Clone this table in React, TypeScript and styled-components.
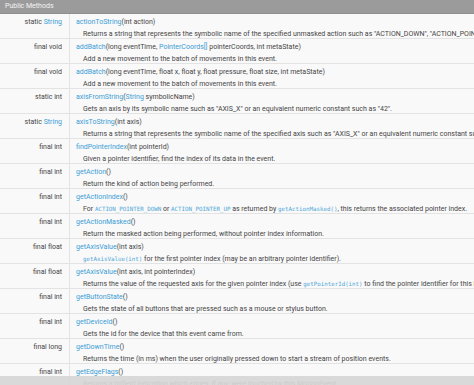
import styled, { createGlobalStyle } from "styled-components";
import React from "react";

const GlobalStyle = createGlobalStyle`
  html, body {
    margin: 0;
    padding: 0;
    background: #f9f9f9;
    overflow: hidden;
  }
  body {
    font-family: Roboto, "Liberation Sans", sans-serif;
    color: #454545;
  }
`;

const Page = styled.div`
  position: relative;
  width: 474px;
  height: 385px;
  overflow: hidden;
`;

const Header = styled.div`
  height: 13px;
  background: #9b9b9b;
  border-bottom: 1px solid #8f8f8f;
  color: #f4f4f4;
  font-size: 7px;
  line-height: 13px;
  padding-left: 5px;
`;

const Table = styled.div`
  display: grid;
  grid-template-columns: 70px 1fr;
`;

const TypeCell = styled.div`
  height: 25px;
  box-sizing: border-box;
  border-bottom: 1px solid #e3e3e3;
  border-right: 1px solid #e3e3e3;
  text-align: right;
  padding: 2px 7px 0 0;
  font-size: 7px;
  line-height: 12px;
  white-space: nowrap;
`;

const MethodCell = styled.div`
  height: 25px;
  box-sizing: border-box;
  border-bottom: 1px solid #e3e3e3;
  padding: 2px 0 0 6px;
  font-size: 7px;
  line-height: 12px;
  white-space: nowrap;
  overflow: hidden;
`;

const Desc = styled.div`
  padding-left: 7px;
`;

const Link = styled.span`
  color: #3a9dd6;
`;

const Code = styled.code`
  font-family: "DejaVu Sans Mono", "Liberation Mono", monospace;
  font-size: 5.8px;
  color: #4fa6d8;
`;

const ScrollBar = styled.div`
  position: absolute;
  left: 0;
  right: 0;
  bottom: 0;
  height: 9px;
  background: rgba(214, 214, 214, 0.92);
`;

type Row = {
  type: React.ReactNode;
  sig: React.ReactNode;
  desc: React.ReactNode;
};

const rows: Row[] = [
  {
    type: (
      <>
        static <Link>String</Link>
      </>
    ),
    sig: (
      <>
        <Link>actionToString</Link>(int action)
      </>
    ),
    desc: 'Returns a string that represents the symbolic name of the specified unmasked action such as "ACTION_DOWN", "ACTION_POINTER_DOWN(3)" or an equivalent numeric constant such as "42" if unknown.',
  },
  {
    type: "final void",
    sig: (
      <>
        <Link>addBatch</Link>(long eventTime, <Link>PointerCoords[]</Link>{" "}
        pointerCoords, int metaState)
      </>
    ),
    desc: "Add a new movement to the batch of movements in this event.",
  },
  {
    type: "final void",
    sig: (
      <>
        <Link>addBatch</Link>(long eventTime, float x, float y, float pressure,
        float size, int metaState)
      </>
    ),
    desc: "Add a new movement to the batch of movements in this event.",
  },
  {
    type: "static int",
    sig: (
      <>
        <Link>axisFromString</Link>(<Link>String</Link> symbolicName)
      </>
    ),
    desc: 'Gets an axis by its symbolic name such as "AXIS_X" or an equivalent numeric constant such as "42".',
  },
  {
    type: (
      <>
        static <Link>String</Link>
      </>
    ),
    sig: (
      <>
        <Link>axisToString</Link>(int axis)
      </>
    ),
    desc: 'Returns a string that represents the symbolic name of the specified axis such as "AXIS_X" or an equivalent numeric constant such as "42".',
  },
  {
    type: "final int",
    sig: (
      <>
        <Link>findPointerIndex</Link>(int pointerId)
      </>
    ),
    desc: "Given a pointer identifier, find the index of its data in the event.",
  },
  {
    type: "final int",
    sig: (
      <>
        <Link>getAction</Link>()
      </>
    ),
    desc: "Return the kind of action being performed.",
  },
  {
    type: "final int",
    sig: (
      <>
        <Link>getActionIndex</Link>()
      </>
    ),
    desc: (
      <>
        For <Code>ACTION_POINTER_DOWN</Code> or <Code>ACTION_POINTER_UP</Code>{" "}
        as returned by <Code>getActionMasked()</Code>, this returns the
        associated pointer index.
      </>
    ),
  },
  {
    type: "final int",
    sig: (
      <>
        <Link>getActionMasked</Link>()
      </>
    ),
    desc: "Return the masked action being performed, without pointer index information.",
  },
  {
    type: "final float",
    sig: (
      <>
        <Link>getAxisValue</Link>(int axis)
      </>
    ),
    desc: (
      <>
        <Code>getAxisValue(int)</Code> for the first pointer index (may be an
        arbitrary pointer identifier).
      </>
    ),
  },
  {
    type: "final float",
    sig: (
      <>
        <Link>getAxisValue</Link>(int axis, int pointerIndex)
      </>
    ),
    desc: (
      <>
        Returns the value of the requested axis for the given pointer index
        (use <Code>getPointerId(int)</Code> to find the pointer identifier for
        this index).
      </>
    ),
  },
  {
    type: "final int",
    sig: (
      <>
        <Link>getButtonState</Link>()
      </>
    ),
    desc: "Gets the state of all buttons that are pressed such as a mouse or stylus button.",
  },
  {
    type: "final int",
    sig: (
      <>
        <Link>getDeviceId</Link>()
      </>
    ),
    desc: "Gets the id for the device that this event came from.",
  },
  {
    type: "final long",
    sig: (
      <>
        <Link>getDownTime</Link>()
      </>
    ),
    desc: "Returns the time (in ms) when the user originally pressed down to start a stream of position events.",
  },
  {
    type: "final int",
    sig: (
      <>
        <Link>getEdgeFlags</Link>()
      </>
    ),
    desc: "Returns a bitfield indicating which edges, if any, were touched by this MotionEvent.",
  },
];

const App = () => {
  return (
    <Page>
      <GlobalStyle />
      <Header>Public Methods</Header>
      <Table>
        {rows.map((row, i) => (
          <React.Fragment key={i}>
            <TypeCell>{row.type}</TypeCell>
            <MethodCell>
              <div>{row.sig}</div>
              <Desc>{row.desc}</Desc>
            </MethodCell>
          </React.Fragment>
        ))}
      </Table>
      <ScrollBar />
    </Page>
  );
};

export default App;
